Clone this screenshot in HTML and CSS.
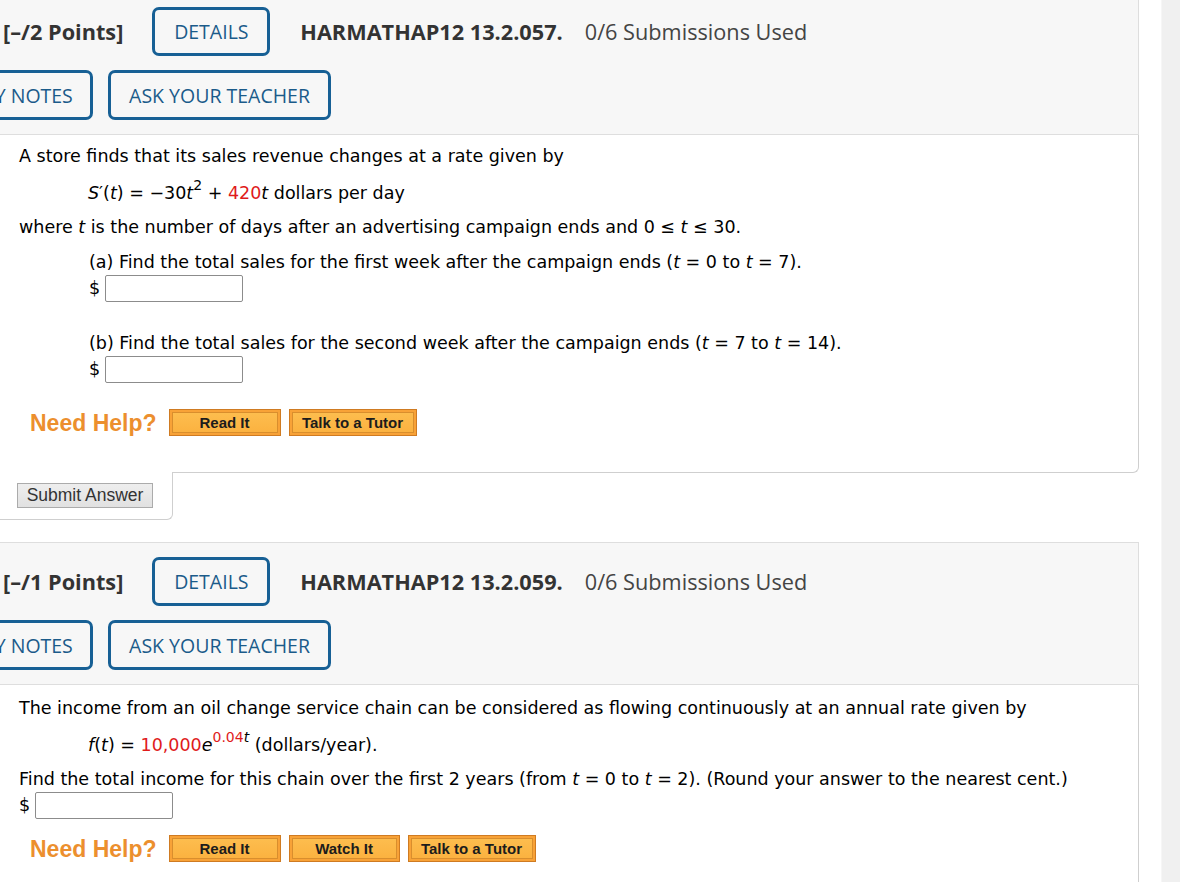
FILE: index.html
```html
<!DOCTYPE html>
<html lang="en">
<head>
<meta charset="utf-8">
<title>Questions</title>
<link rel="stylesheet" href="styles.css">
</head>
<body>
<div class="page">
  <div class="main">
    <div class="column">

      <section class="question">
        <div class="q-head">
          <div class="head-row">
            <span class="points">[–/2 Points]</span>
            <button class="hbtn details">DETAILS</button>
            <span class="qid">HARMATHAP12 13.2.057.</span>
            <span class="subs">0/6 Submissions Used</span>
          </div>
          <div class="head-row2">
            <button class="hbtn notes">MY NOTES</button>
            <button class="hbtn ask">ASK YOUR TEACHER</button>
          </div>
        </div>
        <div class="q-body">
          <div class="line">A store finds that its sales revenue changes at a rate given by</div>
          <div class="eq"><i>S</i>′(<i>t</i>) = −30<i>t</i><sup>2</sup> + <span class="red">420</span><i>t</i> dollars per day</div>
          <div class="line l3">where <i>t</i> is the number of days after an advertising campaign ends and 0 ≤ <i>t</i> ≤ 30.</div>
          <div class="part">
            <div>(a) Find the total sales for the first week after the campaign ends (<i>t</i> = 0 to <i>t</i> = 7).</div>
            <div class="answer"><span>$</span><span class="input"></span></div>
          </div>
          <div class="part part-b">
            <div>(b) Find the total sales for the second week after the campaign ends (<i>t</i> = 7 to <i>t</i> = 14).</div>
            <div class="answer"><span>$</span><span class="input"></span></div>
          </div>
          <div class="help">
            <span class="need">Need Help?</span>
            <button class="orange w-read"><span>Read It</span></button>
            <button class="orange w-tutor"><span>Talk to a Tutor</span></button>
          </div>
        </div>
        <div class="submit-tab">
          <button class="submit-btn">Submit Answer</button>
        </div>
      </section>

      <section class="question q2">
        <div class="q-head">
          <div class="head-row">
            <span class="points">[–/1 Points]</span>
            <button class="hbtn details">DETAILS</button>
            <span class="qid">HARMATHAP12 13.2.059.</span>
            <span class="subs">0/6 Submissions Used</span>
          </div>
          <div class="head-row2">
            <button class="hbtn notes">MY NOTES</button>
            <button class="hbtn ask">ASK YOUR TEACHER</button>
          </div>
        </div>
        <div class="q-body q-body2">
          <div class="line">The income from an oil change service chain can be considered as flowing continuously at an annual rate given by</div>
          <div class="eq"><i>f</i>(<i>t</i>) = <span class="red">10,000</span><i>e</i><sup><span class="red">0.04</span><i>t</i></sup> (dollars/year).</div>
          <div class="line l3">Find the total income for this chain over the first 2 years (from <i>t</i> = 0 to <i>t</i> = 2). (Round your answer to the nearest cent.)</div>
          <div class="answer answer2"><span>$</span><span class="input"></span></div>
          <div class="help help2">
            <span class="need">Need Help?</span>
            <button class="orange w-read"><span>Read It</span></button>
            <button class="orange w-watch"><span>Watch It</span></button>
            <button class="orange w-tutor"><span>Talk to a Tutor</span></button>
          </div>
        </div>
      </section>

    </div>
  </div>
  <div class="scrollbar"></div>
</div>
</body>
</html>
```

FILE: styles.css
```css
* { box-sizing: border-box; }

html, body {
  margin: 0;
  padding: 0;
  background: #ffffff;
}

body {
  font-family: "DejaVu Sans", Verdana, sans-serif;
  color: #000;
}

.page {
  display: flex;
  height: 882px;
  overflow: hidden;
}

.main {
  width: 1161px;
  overflow: hidden;
}

.column {
  width: 1179px;
  margin-left: -40px;
  margin-top: -8px;
}

.scrollbar {
  width: 19px;
  background: #f0f0f0;
  border-left: 1px solid #f6f6f6;
}

/* ---------- header ---------- */
.q-head {
  background: #f7f7f7;
  border-top: 1px solid #dedede;
  border-bottom: 1px solid #dedede;
  border-right: 1px solid #dedede;
  padding: 14px 0 14px 43px;
  font-family: "Open Sans", "DejaVu Sans", sans-serif;
}

.head-row {
  display: flex;
  align-items: center;
  height: 49px;
}

.head-row2 {
  display: flex;
  align-items: center;
  gap: 15px;
  height: 50px;
  margin-top: 14px;
  margin-left: -46px;
}

.points {
  font-weight: 700;
  font-size: 21.7px;
  color: #333;
  margin-right: 29px;
}

.hbtn {
  height: 100%;
  border: 3px solid #176095;
  border-radius: 7px;
  background: transparent;
  color: #1b5b8a;
  font-family: "Open Sans", "DejaVu Sans", sans-serif;
  font-size: 19.5px;
  padding: 0;
  display: flex;
  align-items: center;
  justify-content: center;
}

.details { width: 118px; margin-right: 30px; }
.notes { width: 136px; }
.ask { width: 223px; }

.qid {
  font-weight: 700;
  font-size: 21.7px;
  color: #333;
  margin-right: 22px;
}

.subs {
  font-size: 21.7px;
  color: #444;
}

/* ---------- body ---------- */
.q-body {
  background: #fff;
  border-right: 1px solid #cfcfcf;
  border-bottom: 1px solid #cfcfcf;
  border-bottom-right-radius: 6px;
  padding: 9px 0 36px 59px;
  font-size: 17.5px;
  line-height: 24px;
}

.q-body2 {
  border-bottom: none;
  padding-top: 11px;
  padding-bottom: 60px;
}

.red { color: #e01b1b; }

sup {
  font-size: 0.8em;
  line-height: 0;
  vertical-align: 0.62em;
}

.eq {
  margin-top: 13px;
  padding-left: 69px;
}

.l3 { margin-top: 10px; }

.part {
  padding-left: 70px;
  margin-top: 11px;
}

.part-b { margin-top: 29px; }

.answer {
  display: flex;
  align-items: center;
  gap: 5px;
  height: 28px;
  margin-top: 0;
}

.input {
  display: block;
  width: 138px;
  height: 27px;
  border: 1px solid #8c8c8c;
  border-radius: 2px;
  background: #fff;
}

.help {
  display: flex;
  align-items: center;
  margin-top: 26px;
  padding-left: 11px;
}

.help2 { margin-top: 16px; }

.need {
  font-family: "Liberation Sans", Arial, sans-serif;
  font-weight: 700;
  font-size: 23px;
  color: #ec8f2e;
  margin-right: 12px;
}

.orange {
  height: 27px;
  border: 1px solid #cf7b22;
  background: #f8a237;
  padding: 2px;
  margin-right: 8px;
}

.orange span {
  display: flex;
  height: 100%;
  align-items: center;
  justify-content: center;
  border: 1px solid #d98e2d;
  background: linear-gradient(#fdbd4e, #fbb240);
  font-family: "Liberation Sans", Arial, sans-serif;
  font-weight: 700;
  font-size: 15px;
  color: #1c1c1c;
}

.w-read { width: 112px; }
.w-watch { width: 111px; margin-right: 8px; }
.w-tutor { width: 128px; }

/* ---------- submit ---------- */
.submit-tab {
  width: 213px;
  height: 48px;
  margin-top: -1px;
  background: #fff;
  border-right: 1px solid #cfcfcf;
  border-bottom: 1px solid #cfcfcf;
  border-bottom-right-radius: 6px;
  padding: 11px 0 0 57px;
}

.submit-btn {
  width: 136px;
  height: 25px;
  border: 1px solid #ababab;
  background: linear-gradient(#eeeeee, #e1e1e1);
  font-family: "Liberation Sans", Arial, sans-serif;
  font-size: 17.5px;
  color: #333;
  padding: 0;
}

.q2 { margin-top: 22px; }
```
